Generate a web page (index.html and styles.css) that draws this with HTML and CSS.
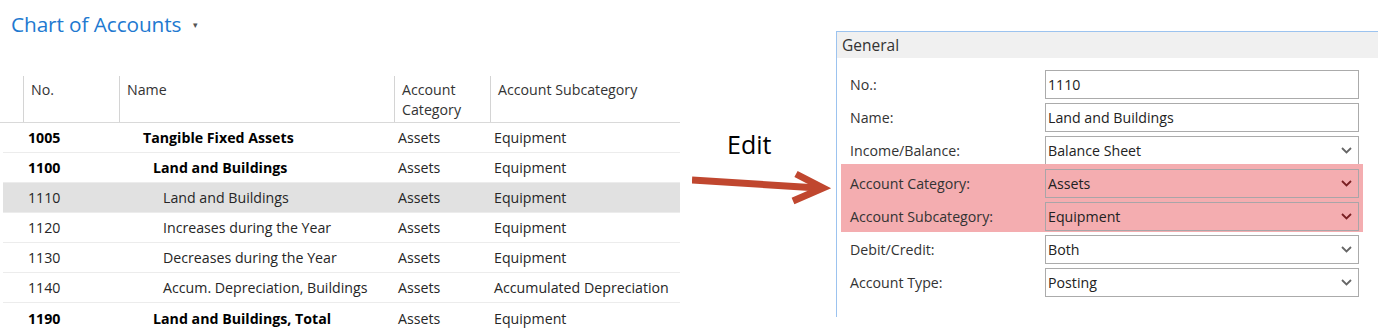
FILE: index.html
```html
<!DOCTYPE html>
<html>
<head>
<meta charset="utf-8">
<link rel="stylesheet" href="styles.css">
</head>
<body>
<div class="page">
  <section class="list">
    <h1 class="title">Chart of Accounts <span class="caret">&#9662;</span></h1>
    <div class="table">
      <div class="row head">
        <div class="c c-mark"></div>
        <div class="c c-no sep">No.</div>
        <div class="c c-name sep">Name</div>
        <div class="c c-cat sep">Account<br>Category</div>
        <div class="c c-sub sep">Account Subcategory</div>
      </div>
      <div class="row bold">
        <div class="c c-mark"></div><div class="c c-no">1005</div><div class="c c-name l1">Tangible Fixed Assets</div><div class="c c-cat">Assets</div><div class="c c-sub">Equipment</div>
      </div>
      <div class="row bold">
        <div class="c c-mark"></div><div class="c c-no">1100</div><div class="c c-name l2">Land and Buildings</div><div class="c c-cat">Assets</div><div class="c c-sub">Equipment</div>
      </div>
      <div class="row selected">
        <div class="c c-mark"></div><div class="c c-no">1110</div><div class="c c-name l3">Land and Buildings</div><div class="c c-cat">Assets</div><div class="c c-sub">Equipment</div>
      </div>
      <div class="row">
        <div class="c c-mark"></div><div class="c c-no">1120</div><div class="c c-name l3">Increases during the Year</div><div class="c c-cat">Assets</div><div class="c c-sub">Equipment</div>
      </div>
      <div class="row">
        <div class="c c-mark"></div><div class="c c-no">1130</div><div class="c c-name l3">Decreases during the Year</div><div class="c c-cat">Assets</div><div class="c c-sub">Equipment</div>
      </div>
      <div class="row">
        <div class="c c-mark"></div><div class="c c-no">1140</div><div class="c c-name l3">Accum. Depreciation, Buildings</div><div class="c c-cat">Assets</div><div class="c c-sub">Accumulated Depreciation</div>
      </div>
      <div class="row bold last">
        <div class="c c-mark"></div><div class="c c-no">1190</div><div class="c c-name l2">Land and Buildings, Total</div><div class="c c-cat">Assets</div><div class="c c-sub">Equipment</div>
      </div>
    </div>
  </section>

  <section class="annot">
    <div class="edit">Edit</div>
    <svg class="arrow" width="146" height="36" viewBox="0 0 146 36">
      <path d="M0 10 L126 18" stroke="#c0472f" stroke-width="7" fill="none"/>
      <path d="M104 4 L131 18 L101 31" stroke="#c0472f" stroke-width="7" fill="none" stroke-linejoin="miter" stroke-miterlimit="10"/>
    </svg>
  </section>

  <section class="card">
    <div class="card-head">General</div>
    <div class="fields">
      <div class="field"><div class="label">No.:</div><div class="input">1110</div></div>
      <div class="field"><div class="label">Name:</div><div class="input">Land and Buildings</div></div>
      <div class="field"><div class="label">Income/Balance:</div><div class="input select">Balance Sheet<svg class="chev" width="11" height="7" viewBox="0 0 11 7"><path d="M1 1 L5.5 5.5 L10 1" fill="none" stroke="currentColor" stroke-width="1.8"/></svg></div></div>
      <div class="hl">
        <div class="field"><div class="label">Account Category:</div><div class="input select">Assets<svg class="chev" width="11" height="7" viewBox="0 0 11 7"><path d="M1 1 L5.5 5.5 L10 1" fill="none" stroke="currentColor" stroke-width="1.8"/></svg></div></div>
        <div class="field"><div class="label">Account Subcategory:</div><div class="input select">Equipment<svg class="chev" width="11" height="7" viewBox="0 0 11 7"><path d="M1 1 L5.5 5.5 L10 1" fill="none" stroke="currentColor" stroke-width="1.8"/></svg></div></div>
      </div>
      <div class="field"><div class="label">Debit/Credit:</div><div class="input select">Both<svg class="chev" width="11" height="7" viewBox="0 0 11 7"><path d="M1 1 L5.5 5.5 L10 1" fill="none" stroke="currentColor" stroke-width="1.8"/></svg></div></div>
      <div class="field"><div class="label">Account Type:</div><div class="input select">Posting<svg class="chev" width="11" height="7" viewBox="0 0 11 7"><path d="M1 1 L5.5 5.5 L10 1" fill="none" stroke="currentColor" stroke-width="1.8"/></svg></div></div>
    </div>
  </section>
</div>
</body>
</html>
```

FILE: styles.css
```css
html, body {
  margin: 0;
  padding: 0;
  background: #ffffff;
}
body {
  font-family: "Open Sans", "Noto Sans", "Liberation Sans", sans-serif;
  color: #262626;
  width: 1378px;
  height: 332px;
  overflow: hidden;
}
.page {
  display: flex;
  align-items: flex-start;
}

/* ---------- list ---------- */
.list {
  width: 680px;
  flex: none;
}
.title {
  margin: 0;
  padding: 9px 0 0 11px;
  height: 67px;
  box-sizing: border-box;
  font-weight: 400;
  font-size: 20.8px;
  line-height: 30px;
  color: #2179d0;
  letter-spacing: -0.1px;
}
.caret {
  font-size: 9px;
  color: #555;
  vertical-align: 4px;
  margin-left: 6px;
}
.table {
  font-size: 14.2px;
}
.row {
  display: grid;
  grid-template-columns: 20px 96px 275px 96px 190px;
  margin-left: 3px;
  height: 30px;
  align-items: center;
  border-bottom: 1px solid #ececec;
  box-sizing: border-box;
}
.row.last { border-bottom: none; }
.row.head {
  margin-left: 0;
  padding-left: 3px;
  height: 56px;
  padding-top: 9px;
  align-items: stretch;
  border-bottom: 1px solid #d9d9d9;
  color: #333;
}
.row.head .c {
  line-height: 20px;
  padding-top: 4px;
  padding-left: 7px;
}
.row.head .sep {
  border-left: 1px solid #d4d4d4;
}
.c {
  white-space: nowrap;
  overflow: visible;
}
.c-no { padding-left: 5px; }
.c-cat { padding-left: 4px; }
.c-sub { padding-left: 4px; }
.l1 { padding-left: 24px; }
.l2 { padding-left: 34px; }
.l3 { padding-left: 44px; }
.row.bold .c-no, .row.bold .c-name {
  font-weight: 700;
  color: #000;
}
.row.selected {
  background: #e1e1e1;
}

/* ---------- annotation ---------- */
.annot {
  width: 156px;
  flex: none;
  position: relative;
  height: 332px;
}
.edit {
  position: absolute;
  left: 47px;
  top: 128px;
  font-size: 25px;
  line-height: 32px;
  color: #000;
}
.arrow {
  position: absolute;
  left: 12px;
  top: 170px;
}

/* ---------- card ---------- */
.card {
  flex: 1;
  margin-top: 31px;
  height: 286px;
  border-top: 1px solid #9cc3ef;
  border-left: 1px solid #9cc3ef;
  box-sizing: border-box;
}
.card-head {
  background: #f0f0f0;
  height: 26px;
  line-height: 26px;
  padding-left: 5px;
  font-size: 15.5px;
  color: #333;
}
.fields {
  display: flex;
  flex-direction: column;
  gap: 4px;
  padding: 12px 19px 0 13px;
  font-size: 14.2px;
}
.field {
  display: grid;
  grid-template-columns: 195px 314px;
  align-items: center;
}
.label {
  color: #333;
}
.input {
  height: 29px;
  border: 1px solid #ababab;
  box-sizing: border-box;
  padding-left: 2px;
  line-height: 26px;
  color: #222;
  display: flex;
  align-items: center;
  justify-content: space-between;
  background: #fff;
}
.chev {
  margin-right: 6px;
  color: #666;
}
.hl {
  display: flex;
  flex-direction: column;
  gap: 4px;
  background: #f4adb0;
  margin: -5px -4px -1px -9px;
  padding: 5px 4px 1px 9px;
}
.hl .input {
  background: transparent;
  border-color: #a9a5a8;
}
.hl .chev {
  color: #7a1f22;
}
```
